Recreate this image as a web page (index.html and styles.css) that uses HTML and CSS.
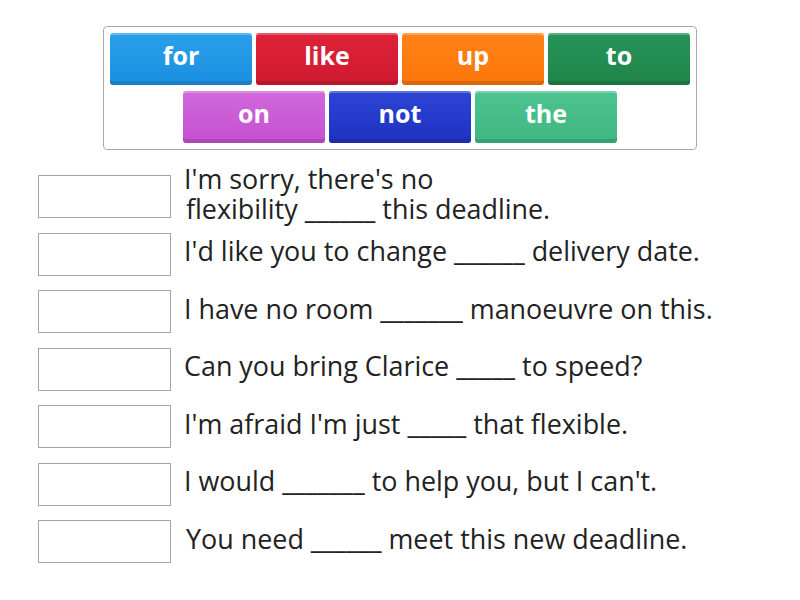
FILE: index.html
```html
<!DOCTYPE html>
<html>
<head>
<meta charset="utf-8">
<link rel="stylesheet" href="styles.css">
</head>
<body>
<div class="page">
  <div class="bank">
    <div class="bank-row">
      <div class="tile t-blue">for</div>
      <div class="tile t-red">like</div>
      <div class="tile t-orange">up</div>
      <div class="tile t-green">to</div>
    </div>
    <div class="bank-row">
      <div class="tile t-violet">on</div>
      <div class="tile t-navy">not</div>
      <div class="tile t-mint">the</div>
    </div>
  </div>
  <div class="items">
    <div class="item"><div class="slot"></div><div class="text">I'm sorry, there's no<br><span class="ind">flexibility ______ this deadline.</span></div></div>
    <div class="item"><div class="slot"></div><div class="text">I'd like you to change ______ delivery date.</div></div>
    <div class="item"><div class="slot"></div><div class="text">I have no room _______ manoeuvre on this.</div></div>
    <div class="item"><div class="slot"></div><div class="text">Can you bring Clarice _____ to speed?</div></div>
    <div class="item"><div class="slot"></div><div class="text">I'm afraid I'm just _____ that flexible.</div></div>
    <div class="item"><div class="slot"></div><div class="text">I would _______ to help you, but I can't.</div></div>
    <div class="item"><div class="slot"></div><div class="text"><span class="ind">You need ______ meet this new deadline.</span></div></div>
  </div>
</div>
</body>
</html>
```

FILE: styles.css
```css
html, body {
  margin: 0;
  padding: 0;
  background: #ffffff;
}
body {
  font-family: "Open Sans", "Liberation Sans", sans-serif;
  width: 800px;
  height: 600px;
  overflow: hidden;
}
.page {
  padding-top: 26px;
}
.bank {
  width: 580px;
  margin-left: 103px;
  padding: 6px;
  border: 1px solid #a9a9a9;
  border-radius: 4px;
  display: flex;
  flex-direction: column;
  gap: 6px;
}
.bank-row {
  display: flex;
  justify-content: center;
  gap: 4px;
}
.tile {
  width: 142px;
  height: 52px;
  box-sizing: border-box;
  border-radius: 3px;
  color: #ffffff;
  font-weight: 700;
  font-size: 25px;
  display: flex;
  align-items: center;
  justify-content: center;
  padding-bottom: 9px;
  box-shadow: inset 0 2px 0 rgba(255,255,255,0.25), inset 0 -4px 0 rgba(0,0,0,0.12);
}
.t-blue { background: linear-gradient(#2aa0ec, #1b8fe0); }
.t-red { background: linear-gradient(#de2238, #cf1a2f); }
.t-orange { background: linear-gradient(#ff8216, #fb760b); }
.t-green { background: linear-gradient(#27945a, #1f8448); }
.t-violet { background: linear-gradient(#d169dc, #c450d0); }
.t-navy { background: linear-gradient(#2c44d4, #1f32c2); }
.t-mint { background: linear-gradient(#4dc490, #40b782); }

.items {
  margin-top: 25px;
  padding-left: 38px;
  display: flex;
  flex-direction: column;
  gap: 14.5px;
}
.item {
  display: flex;
  align-items: center;
  height: 43px;
}
.slot {
  width: 133px;
  height: 43px;
  box-sizing: border-box;
  border: 1px solid #a6a6a6;
  flex: none;
}
.text {
  margin-left: 13px;
  padding-bottom: 6px;
  font-size: 26.9px;
  line-height: 30px;
  color: #222222;
  white-space: nowrap;
}
.ind {
  padding-left: 2px;
}
```
